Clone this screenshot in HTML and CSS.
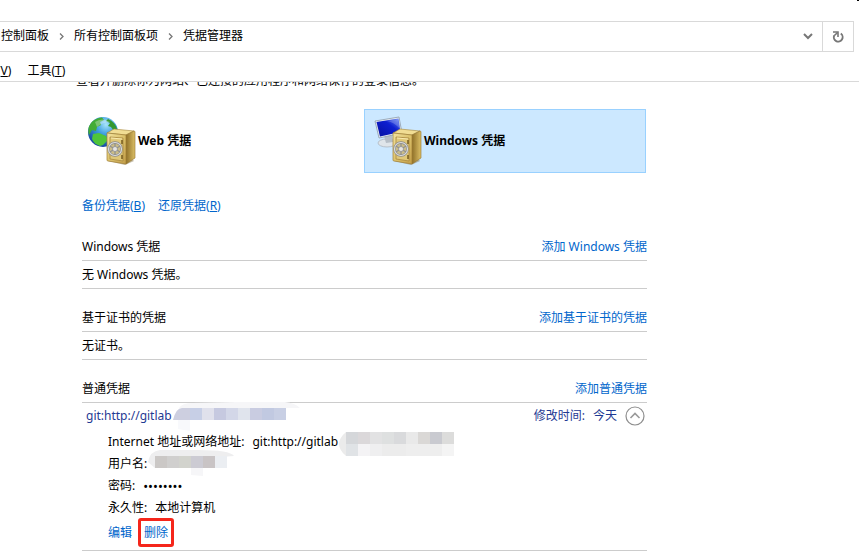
FILE: index.html
```
<!DOCTYPE html>
<html lang="zh-CN">
<head>
    <meta charset="UTF-8">
    <meta name="viewport" content="width=device-width, initial-scale=1.0">
    <title>凭据管理器</title>
    <link rel="stylesheet" href="styles.css">
</head>
<body>
    <!-- shared gradients and the safe used by both vault icons -->
    <svg class="defs" aria-hidden="true">
        <defs>
            <linearGradient id="gold" x1="0" y1="0" x2="1" y2="1">
                <stop offset="0" stop-color="#f3e3a0"/>
                <stop offset="0.5" stop-color="#dcc26c"/>
                <stop offset="1" stop-color="#c29d48"/>
            </linearGradient>
            <linearGradient id="goldSide" x1="0" y1="0" x2="1" y2="0">
                <stop offset="0" stop-color="#8f7028"/>
                <stop offset="1" stop-color="#dcbf66"/>
            </linearGradient>
            <radialGradient id="sea" cx="0.6" cy="0.25" r="0.8">
                <stop offset="0" stop-color="#a8e4fa"/>
                <stop offset="0.4" stop-color="#3f9fe0"/>
                <stop offset="1" stop-color="#123f9a"/>
            </radialGradient>
            <linearGradient id="screen" x1="0" y1="1" x2="1" y2="0">
                <stop offset="0" stop-color="#0610a0"/>
                <stop offset="0.6" stop-color="#0d1fd0"/>
                <stop offset="1" stop-color="#6c8cf5"/>
            </linearGradient>
            <symbol id="safe" viewBox="0 0 30 37">
                <path d="M2 33L19 37L28 33L26 31L4 31Z" fill="#8a7a50" opacity="0.5"/>
                <path d="M1 5L8 1L28 3L20 7Z" fill="#f1dd94" stroke="#a58438" stroke-width="0.6"/>
                <path d="M20 7L28 3Q29 3 29 4V30L20 36Z" fill="url(#goldSide)" stroke="#93722c" stroke-width="0.6"/>
                <path d="M1 5L20 7V36L2 33Q1 33 1 32Z" fill="url(#gold)" stroke="#a07e34" stroke-width="0.7"/>
                <path d="M4 9L17 10V33L4 31Z" fill="#e0c878" stroke="#a88840" stroke-width="0.8"/>
                <path d="M5 10L16 11" stroke="#fff3bd" stroke-width="0.8"/>
                <path d="M16 12v4M16 27v4" stroke="#705519" stroke-width="1.4"/>
                <circle cx="9" cy="21" r="6.5" fill="#cbbd88" stroke="#8a8a88" stroke-width="2.4"/>
                <circle cx="9" cy="21" r="6.5" fill="none" stroke="#dcdcdc" stroke-width="1.2"/>
                <path d="M9 15v12M3.800 18l10.400 6M14.200 18l-10.400 6" stroke="#8f8f8f" stroke-width="1.2"/>
                <circle cx="9" cy="21" r="2.5" fill="#e4e4e4" stroke="#888" stroke-width="0.7"/>
            </symbol>
        </defs>
    </svg>

    <header>
        <div class="address-bar">
            <nav class="breadcrumb">
                <a href="#">控制面板</a>
                <svg class="sep" viewBox="0 0 5 7"><path d="M1 0.5L4 3.5L1 6.5"/></svg>
                <a href="#">所有控制面板项</a>
                <svg class="sep" viewBox="0 0 5 7"><path d="M1 0.5L4 3.5L1 6.5"/></svg>
                <a href="#">凭据管理器</a>
            </nav>
            <button class="history" aria-label="以前的位置">
                <svg width="10" height="7" viewBox="0 0 10 7"><path d="M1 1L5 5L9 1" fill="none" stroke="#777" stroke-width="2"/></svg>
            </button>
            <button class="refresh" aria-label="刷新">
                <svg width="12" height="12" viewBox="0 0 12 12">
                    <path d="M8.800 2.600A4.400 4.400 0 1 1 2.200 4.400" fill="none" stroke="#777" stroke-width="1.9"/>
                    <path d="M1 1H6V6" fill="none" stroke="#777" stroke-width="1.6"/>
                    <path d="M5.500 1.500L2.200 4.800" stroke="#777" stroke-width="1.6"/>
                </svg>
            </button>
        </div>
        <nav class="menu">
            <a href="#">(<u>V</u>)</a>
            <a href="#">工具(<u>T</u>)</a>
        </nav>
    </header>

    <main>
        <p class="intro">查看并删除你为网站、已连接的应用程序和网络保存的登录信息。</p>

        <div class="vaults">
            <a class="vault" href="#">
                <svg width="48" height="50" viewBox="0 0 48 50">
                    <circle cx="15" cy="16" r="15" fill="url(#sea)"/>
                    <path d="M3 7Q7 2 14 1.5L16 4L12 6L13 9L9 11L8 15L4 14L1 19Q-1 12 3 7Z" fill="#43ac35"/>
                    <path d="M5 18L11 17L18 20L20 24L15 29L12 30Q6 28 4 23Z" fill="#4fc439"/>
                    <path d="M20 3Q27 6 29 13L26 15L23 11L20 10L22 7L18 5Z" fill="#35982f"/>
                    <path d="M7 6Q14 1 22 6Q15 6 9 11Z" fill="#fff" opacity="0.3"/>
                    <use href="#safe" x="18" y="12" width="30" height="37"/>
                </svg>
                Web 凭据
            </a>
            <a class="vault selected" href="#">
                <svg width="48" height="50" viewBox="0 0 48 50">
                    <ellipse cx="13" cy="27" rx="9" ry="4" fill="#dfe5ea" stroke="#a7afb7" stroke-width="0.7"/>
                    <path d="M10 20L18 19L19 26L12 27Z" fill="#b6bec6"/>
                    <path d="M1 5L25 1L28 17L5 22Z" fill="#e8eef5" stroke="#8d9cab" stroke-width="0.8"/>
                    <path d="M2.500 6L24.500 2.500L26.500 16L6 20.500Z" fill="url(#screen)"/>
                    <path d="M13 5L24 3L26 13Q20 6 13 5Z" fill="#fff" opacity="0.2"/>
                    <use href="#safe" x="18" y="12" width="30" height="37"/>
                </svg>
                Windows 凭据
            </a>
        </div>

        <div class="tools">
            <a href="#">备份凭据(<u>B</u>)</a>
            <a href="#">还原凭据(<u>R</u>)</a>
        </div>

        <section>
            <div class="section-head">
                <h2>Windows 凭据</h2>
                <a href="#">添加 Windows 凭据</a>
            </div>
            <p class="empty">无 Windows 凭据。</p>
        </section>

        <section>
            <div class="section-head">
                <h2>基于证书的凭据</h2>
                <a href="#">添加基于证书的凭据</a>
            </div>
            <p class="empty">无证书。</p>
        </section>

        <section>
            <div class="section-head">
                <h2>普通凭据</h2>
                <a href="#">添加普通凭据</a>
            </div>
            <div class="entry">
                <div class="entry-head">
                    <span class="masked">git:http://gitlab
                        <svg class="mosaic" width="130" height="30" viewBox="0 0 130 30">
                            <path d="M6 6Q9 1 20 1L62 0H112Q122 1 127 6Z" fill="#f6f6f8"/>
                            <path d="M5 18H17V29L5 27Z" fill="#f8f9fc"/>
                            <path d="M0 18Q3 6 9 6H17V18Z" fill="#cdcfe0"/>
                            <path d="M17 6h12v12h-12z" fill="#c7cfe6"/>
                            <path d="M29 6h12v12h-12z" fill="#e0e1ec"/>
                            <path d="M41 6h12v12h-12z" fill="#c6c9e0"/>
                            <path d="M53 6h12v12h-12z" fill="#d3d7e8"/>
                            <path d="M65 6h12v12h-12z" fill="#e0e4ed"/>
                            <path d="M77 6h12v12h-12z" fill="#c9cce1"/>
                            <path d="M89 6h12v12h-12z" fill="#c1c9e1"/>
                            <path d="M101 6h12v12h-12z" fill="#c8cfe4"/>
                        </svg>
                    </span>
                    <span class="modified">修改时间:<span>今天</span></span>
                    <button class="collapse" aria-label="收起">
                        <svg width="20" height="20" viewBox="0 0 20 20">
                            <circle cx="10" cy="10" r="9" fill="#fff" stroke="#8e8e8e" stroke-width="1.2"/>
                            <path d="M5.500 12L10 7.500L14.500 12" fill="none" stroke="#999" stroke-width="1.6"/>
                        </svg>
                    </button>
                </div>
                <dl>
                    <div>
                        <dt>Internet 地址或网络地址:</dt>
                        <dd class="masked">git:http://gitlab
                            <svg class="mosaic" width="115" height="24" viewBox="0 0 115 24">
                                <path d="M7 0Q-7 12 7 24Z" fill="#ebebeb"/>
                                <path d="M7 0h12v12h-12z" fill="#d5d7da"/>
                                <path d="M19 0h12v12h-12z" fill="#dbd8da"/>
                                <path d="M31 0h12v12h-12z" fill="#e2e2e3"/>
                                <path d="M43 0h12v12h-12z" fill="#dee0e0"/>
                                <path d="M55 0h12v12h-12z" fill="#d9dadc"/>
                                <path d="M67 0h12v12h-12z" fill="#e9e9e9"/>
                                <path d="M79 0h12v12h-12z" fill="#dad8d6"/>
                                <path d="M91 0h12v12h-12z" fill="#c9cad0"/>
                                <path d="M103 0h12v12h-12z" fill="#dcdcdb"/>
                                <path d="M7 12h12v12h-12z" fill="#e0e3e6"/>
                                <path d="M19 12h12v12h-12z" fill="#f4f3f5"/>
                                <path d="M31 12h12v12h-12z" fill="#efeff0"/>
                                <path d="M43 12h24v12h-24z" fill="#ececec"/>
                                <path d="M67 12h36v12h-36z" fill="#eeeeee"/>
                                <path d="M103 12h12v12h-12z" fill="#f4f4f4"/>
                            </svg>
                        </dd>
                    </div>
                    <div>
                        <dt class="masked">用户名:
                            <svg class="mosaic user" width="86" height="28" viewBox="0 0 86 28">
                                <path d="M0 12Q2 1 12 0H50Q82 0 86 6L60 8L7 18Z" fill="#eeeeef"/>
                                <path d="M43 18h12v8l-12 -1z" fill="#f6f6f8"/>
                                <path d="M7 6h12v12h-12z" fill="#cbc8c6"/>
                                <path d="M19 6h12v12h-12z" fill="#d0cfce"/>
                                <path d="M31 6h12v12h-12z" fill="#d2d3cd"/>
                                <path d="M43 6h12v12h-12z" fill="#cccbd3"/>
                                <path d="M55 6h12v12h-12z" fill="#c9c4c5"/>
                                <path d="M67 6h12v12h-12z" fill="#ebeef2"/>
                            </svg>
                        </dt>
                        <dd></dd>
                    </div>
                    <div>
                        <dt>密码:</dt>
                        <dd class="password">••••••••</dd>
                    </div>
                    <div>
                        <dt>永久性:</dt>
                        <dd>本地计算机</dd>
                    </div>
                </dl>
                <div class="actions">
                    <a href="#">编辑</a>
                    <a class="marked" href="#">删除</a>
                </div>
            </div>
        </section>
    </main>
</body>
</html>
```

FILE: styles.css
```
* {
    box-sizing: border-box;
}

body {
    margin: 0;
    background-color: #fff;
    color: #000;
    font-family: "Noto Sans", "Noto Sans CJK SC", sans-serif;
    font-size: 12px;
    line-height: 20px;
}

/* pointer tip in the window corner */
body::after {
    content: "";
    position: absolute;
    top: 0;
    right: 0;
    width: 2px;
    height: 1px;
    background-color: #000;
}

a {
    color: #0066cc;
    text-decoration: none;
}

h2, p, dl, dd {
    margin: 0;
    font-size: 12px;
    font-weight: normal;
}

button {
    display: flex;
    align-items: center;
    justify-content: center;
    padding: 0;
    border: none;
    background: none;
    cursor: pointer;
}

.defs {
    position: absolute;
    width: 0;
    height: 0;
}

header {
    padding-top: 21px;
    border-bottom: 1px solid #d9d9d9;
}

header a {
    color: #000;
}

.address-bar {
    display: flex;
    height: 31px;
    margin-right: 5px;
    border: 1px solid #d9d9d9;
    border-left: none;
}

.breadcrumb {
    display: flex;
    flex: 1;
    align-items: center;
    gap: 10px;
    padding: 0 0 1px 1px;
}

.sep {
    width: 5px;
    height: 7px;
    fill: none;
    stroke: #777;
    stroke-width: 1.3;
}

.history {
    width: 28px;
}

.refresh {
    width: 31px;
    border-left: 1px solid #d9d9d9;
}

.menu {
    display: flex;
    gap: 16px;
    margin-left: -3px;
    padding-top: 9px;
}

main {
    max-width: 648px;
    padding-left: 78px;
    overflow: hidden;
}

/* the page is scrolled, only the foot of this line shows */
.intro {
    margin: -11px 0 0 -2px;
}

.vaults {
    display: grid;
    grid-template-columns: 1fr 1fr;
    gap: 4px;
    margin: 18px 2px 0 0;
}

.vault {
    display: flex;
    align-items: center;
    gap: 2px;
    height: 64px;
    padding-left: 9px;
    border: 1px solid transparent;
    color: #000;
    font-weight: bold;
}

.vault.selected {
    border-color: #99d1ff;
    background-color: #cce8ff;
}

.tools {
    display: flex;
    gap: 13px;
    margin: 23px 4px 17px;
}

section {
    margin: 0 1px 15px 4px;
}

.section-head {
    display: flex;
    justify-content: space-between;
    padding: 4px 0 3px;
    border-bottom: 1px solid #ccc;
}

.empty {
    padding: 4px 0 3px;
    border-bottom: 1px solid #ccc;
}

.entry {
    border-bottom: 1px solid #ccc;
}

.entry-head {
    display: flex;
    align-items: center;
    height: 25px;
    margin-bottom: 4px;
    padding: 0 2px 0 4px;
    color: #1f3a93;
}

.modified {
    display: flex;
    gap: 8px;
    margin-left: auto;
}

.collapse {
    margin-left: 8px;
}

.masked {
    position: relative;
}

/* pixelated cover over the private part of a value */
.mosaic {
    position: absolute;
    top: 0;
    left: 100%;
    margin-left: 1px;
}

.entry-head .mosaic {
    top: -4px;
}

.mosaic.user {
    top: -4px;
}

dl {
    padding-left: 26px;
}

dl div {
    display: flex;
    gap: 8px;
    height: 22px;
}

.password {
    font-size: 13px;
}

.actions {
    display: flex;
    align-items: center;
    gap: 6px;
    height: 34px;
    margin-top: -4px;
    padding: 0 0 1px 26px;
}

.marked {
    padding: 2px 3px 1px;
    border: 3px solid #f5261b;
    border-radius: 3px;
}
```
